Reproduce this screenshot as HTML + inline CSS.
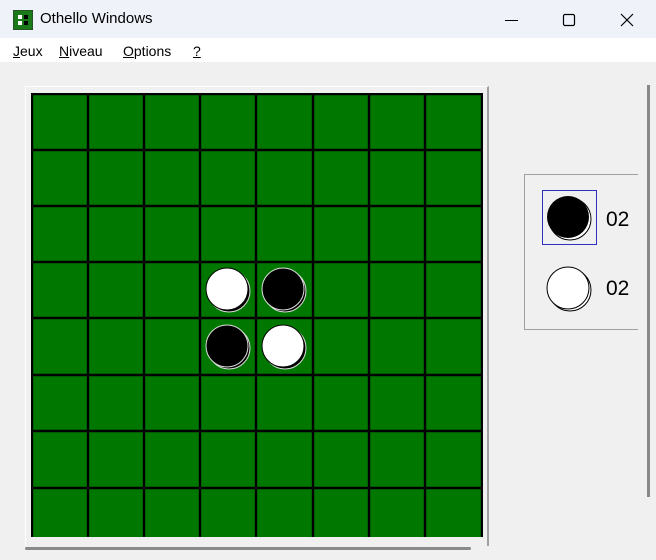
<!DOCTYPE html><html><head><style>
body{margin:0;width:656px;height:560px;background:#f0f0f0;position:relative;overflow:hidden;font-family:"Liberation Sans",sans-serif}
.a{position:absolute}
</style></head><body>
<div class="a" style="left:0;top:0;width:656px;height:38px;background:#eff3f9"></div>
<svg class="a" style="left:13px;top:10px" width="20" height="20"><rect width="20" height="20" fill="#1a7a1a" stroke="#333"/><rect x="5" y="5" width="4" height="4" fill="#fff"/><rect x="11" y="11" width="4" height="4" fill="#000"/><rect x="11" y="5" width="4" height="4" fill="#000"/><rect x="5" y="11" width="4" height="4" fill="#fff"/></svg>
<div class="a" style="left:40px;top:10px;font-size:15px;color:#000">Othello Windows</div>
<svg class="a" style="left:490px;top:8px" width="100" height="24"><path d="M15 12.5h13" stroke="#000" stroke-width="1"/><rect x="73.5" y="6.5" width="11" height="11" rx="1.5" fill="none" stroke="#000" stroke-width="1.2"/></svg>
<svg class="a" style="left:619px;top:12px" width="16" height="16"><path d="M2 2L14 14M14 2L2 14" stroke="#000" stroke-width="1.2"/></svg>
<div class="a" style="left:0;top:38px;width:656px;height:24px;background:#fff;font-size:14px;color:#000">
<span class="a" style="left:13px;top:5px"><u>J</u>eux</span><span class="a" style="left:59px;top:5px"><u>N</u>iveau</span><span class="a" style="left:123px;top:5px"><u>O</u>ptions</span><span class="a" style="left:193px;top:5px"><u>?</u></span></div>
<div class="a" style="left:25px;top:86px;width:464px;height:460px;border-left:1px solid #fff;border-top:1px solid #fff;border-right:2px solid #a0a0a0;box-sizing:border-box"></div>
<svg class="a" style="left:31px;top:93px" width="452" height="444">
<rect x="0" y="0" width="452" height="446" fill="#007800"/>
<g stroke="#000" stroke-width="2.4">
<path d="M1 0V446M57 0V446M113 0V446M169 0V446M225 0V446M282 0V446M338 0V446M394 0V446M451 0V446"/>
<path d="M0 1H452M0 57H452M0 113H452M0 169H452M0 225H452M0 282H452M0 338H452M0 395H452"/>
</g>
<g>
<circle cx="198" cy="198" r="21" fill="#000" stroke="#ddd"/><circle cx="196" cy="196" r="21" fill="#fff" stroke="#000"/>
<circle cx="254" cy="198" r="21" fill="#000" stroke="#ddd"/><circle cx="252" cy="196" r="21" fill="#000" stroke="#ddd"/>
<circle cx="198" cy="255" r="21" fill="#000" stroke="#ddd"/><circle cx="196" cy="253" r="21" fill="#000" stroke="#ddd"/>
<circle cx="254" cy="255" r="21" fill="#000" stroke="#ddd"/><circle cx="252" cy="253" r="21" fill="#fff" stroke="#000"/>
</g></svg>
<div class="a" style="left:647px;top:85px;width:3px;height:412px;background:#888"></div>
<div class="a" style="left:25px;top:547px;width:446px;height:3px;background:#8a8a8a;border-radius:2px"></div>
<div class="a" style="left:524px;top:174px;width:114px;height:156px;border:1px solid #a0a0a0;border-right:none;box-sizing:border-box"></div>
<div class="a" style="left:542px;top:190px;width:55px;height:55px;border:1px solid #3030c0;box-sizing:border-box"></div>
<svg class="a" style="left:540px;top:188px" width="70" height="130">
<circle cx="30" cy="31" r="21" fill="#fff" stroke="#000"/><circle cx="28" cy="29" r="21" fill="#000"/>
<circle cx="30" cy="102" r="21" fill="#fff" stroke="#000"/><circle cx="28" cy="100" r="21" fill="#fff" stroke="#000"/>
</svg>
<div class="a" style="left:606px;top:208px;font-size:21px">02</div>
<div class="a" style="left:606px;top:277px;font-size:21px">02</div>
</body></html>
